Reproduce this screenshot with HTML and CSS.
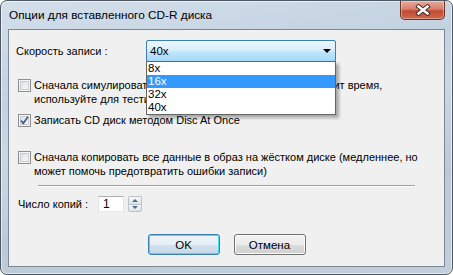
FILE: index.html
```html
<!DOCTYPE html>
<html>
<head>
<meta charset="utf-8">
<link rel="stylesheet" href="styles.css">
</head>
<body>
<div class="window">
  <div class="titlebar">
    <span class="title">Опции для вставленного CD-R диска</span>
    <div class="close">
      <svg width="16" height="12" viewBox="0 0 16 12">
        <path d="M3.5 2.5 L12.5 9.5 M12.5 2.5 L3.5 9.5" stroke="#4a2c26" stroke-width="4.4" stroke-linecap="square"/>
        <path d="M3.5 2.5 L12.5 9.5 M12.5 2.5 L3.5 9.5" stroke="#ffffff" stroke-width="2.4" stroke-linecap="square"/>
      </svg>
    </div>
  </div>
  <div class="frame">
    <div class="client">
      <div class="speed-row">
        <span class="speed-label">Скорость записи :</span>
        <div class="combo">
          <span class="combo-value">40x</span>
          <span class="arrow"></span>
          <ul class="list">
            <li>8x</li>
            <li class="sel">16x</li>
            <li>32x</li>
            <li>40x</li>
          </ul>
        </div>
      </div>

      <div class="check opt1">
        <span class="box"></span>
        <span class="text">Сначала симулировать запись диска (это действие потратит время,<br>используйте для тестирования)</span>
      </div>

      <div class="check opt2">
        <span class="box checked">
          <svg width="11" height="11" viewBox="0 0 11 11"><path d="M2 5.5 L4.3 8.3 L9 1.8" fill="none" stroke="#3d5a8f" stroke-width="1.7"/></svg>
        </span>
        <span class="text">Записать CD диск методом Disc At Once</span>
      </div>

      <div class="check opt3">
        <span class="box"></span>
        <span class="text">Сначала копировать все данные в образ на жёстком диске (медленнее, но<br>может помочь предотвратить ошибки записи)</span>
      </div>

      <div class="separator"></div>

      <div class="copies-row">
        <span class="copies-label">Число копий :</span>
        <span class="num-input">1</span>
        <span class="spinner">
          <span class="spin up"></span>
          <span class="spin down"></span>
        </span>
      </div>

      <div class="buttons">
        <button class="btn default">OK</button>
        <button class="btn">Отмена</button>
      </div>
    </div>
  </div>
</div>
</body>
</html>
```

FILE: styles.css
```css
* { box-sizing: border-box; }
html, body { margin: 0; padding: 0; }
body {
  width: 453px;
  height: 275px;
  overflow: hidden;
  font-family: "Liberation Sans", Arial, sans-serif;
  font-size: 11px;
  color: #000;
  background: #fff;
}
.window {
  width: 453px;
  height: 275px;
  border: 1px solid #4f5963;
  border-radius: 7px;
  background: linear-gradient(170deg, #d3dfea 0%, #c3d2e1 30%, #cbd8e4 45%, #bccad8 70%, #c2ceda 100%);
  box-shadow: inset 0 0 0 1px rgba(255,255,255,0.55);
  display: flex;
  flex-direction: column;
}
.titlebar {
  height: 28px;
  display: flex;
  align-items: flex-start;
  padding-left: 8px;
}
.title {
  margin-top: 7px;
  line-height: 15px;
  font-size: 11.8px;
  color: #000;
}
.close {
  margin-left: auto;
  margin-right: 7px;
  width: 45px;
  height: 19px;
  border: 1px solid #6e3126;
  border-top: none;
  border-radius: 0 0 5px 5px;
  background: linear-gradient(#e6ab9d 0%, #d6806c 45%, #c24a32 55%, #cd6a4e 100%);
  box-shadow: inset 0 0 0 1px rgba(255,255,255,0.35);
  display: flex;
  align-items: center;
  justify-content: center;
}
.frame {
  flex: 1;
  padding: 0 7px 7px 7px;
  display: flex;
}
.client {
  flex: 1;
  border: 1px solid #7b8793;
  background: #f0f0f0;
  display: flex;
  flex-direction: column;
  padding-top: 10px;
}
.speed-row {
  display: flex;
  align-items: center;
  height: 22px;
  padding-left: 7px;
}
.speed-label {
  width: 130px;
}
.combo {
  position: relative;
  width: 190px;
  height: 22px;
  border: 1px solid #3c7fb1;
  border-radius: 2px;
  background: linear-gradient(#eaf6fd 0%, #d9f0fc 45%, #bee6fd 55%, #a7d9f5 100%);
  display: flex;
  align-items: center;
  padding-left: 3px;
  font-size: 11.5px;
}
.arrow {
  margin-left: auto;
  margin-right: 4px;
  width: 0;
  height: 0;
  border-left: 4px solid transparent;
  border-right: 4px solid transparent;
  border-top: 4px solid #000;
}
.list {
  position: absolute;
  left: -1px;
  top: 20px;
  width: 190px;
  margin: 0;
  padding: 0;
  list-style: none;
  background: #fff;
  border: 1px solid #646464;
  box-shadow: 3px 3px 3px rgba(0,0,0,0.3);
  z-index: 5;
}
.list li {
  height: 13px;
  line-height: 13px;
  padding-left: 1px;
}
.list li.sel {
  background: #3399ff;
  color: #fff;
}
.check {
  display: flex;
  align-items: flex-start;
  padding-left: 9px;
  line-height: 14px;
}
.check .text {
  white-space: nowrap;
  margin-left: 3px;
}
.box {
  width: 13px;
  height: 13px;
  margin-top: 1px;
  flex: none;
  border: 1px solid #8f8f8f;
  background: linear-gradient(135deg, #d8dce0 0%, #eef0f2 60%, #fbfbfb 100%);
  box-shadow: inset 0 0 0 1px #f4f4f4, inset 0 0 0 2px #c9cdd2;
  display: flex;
  align-items: center;
  justify-content: center;
}
.opt1 { margin-top: 16px; }
.opt2 { margin-top: 7px; }
.opt3 { margin-top: 23px; }
.separator {
  margin-top: 7px;
  margin-left: 29px;
  width: 377px;
  height: 2px;
  border-top: 1px solid #a0a0a0;
  border-bottom: 1px solid #ffffff;
}
.copies-row {
  margin-top: 9px;
  padding-left: 9px;
  display: flex;
  align-items: center;
  height: 16px;
}
.copies-label {
  width: 80px;
}
.num-input {
  width: 26px;
  height: 16px;
  background: #fff;
  border: 1px solid #e2e3ea;
  border-top-color: #abadb3;
  border-bottom-color: #e3e9ef;
  line-height: 14px;
  padding-left: 4px;
  font-size: 12px;
}
.spinner {
  margin-left: 4px;
  width: 14px;
  height: 16px;
  display: flex;
  flex-direction: column;
}
.spin {
  flex: 1;
  border: 1px solid #b9c1c9;
  background: linear-gradient(#f6f8fa, #dfe4e9);
  display: flex;
  align-items: center;
  justify-content: center;
}
.spin.up { border-bottom: none; border-radius: 2px 2px 0 0; }
.spin.down { border-radius: 0 0 2px 2px; }
.spin.up::after {
  content: "";
  border-left: 3px solid transparent;
  border-right: 3px solid transparent;
  border-bottom: 3px solid #4d6b93;
}
.spin.down::after {
  content: "";
  border-left: 3px solid transparent;
  border-right: 3px solid transparent;
  border-top: 3px solid #4d6b93;
}
.buttons {
  margin-top: 22px;
  display: flex;
  justify-content: center;
  gap: 14px;
}
.btn {
  width: 72px;
  height: 21px;
  font-family: "Liberation Sans", Arial, sans-serif;
  font-size: 11.5px;
  color: #000;
  padding: 0;
  border: 1px solid #707070;
  border-radius: 3px;
  background: linear-gradient(#f2f2f2 0%, #ebebeb 50%, #dddddd 50%, #cfcfcf 100%);
  box-shadow: inset 0 0 0 1px #fcfcfc;
}
.btn.default {
  border-color: #3c7fb1;
  background: linear-gradient(#eef5fa 0%, #e5eff7 50%, #d3e2ee 50%, #c6d8e6 100%);
  box-shadow: inset 0 0 0 1px #48d7fb;
}
```
